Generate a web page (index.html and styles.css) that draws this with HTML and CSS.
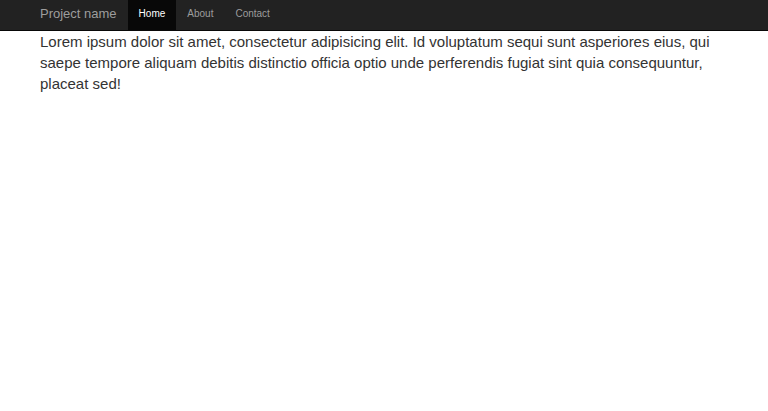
FILE: index.html
```html
<!DOCTYPE html>
<html lang="en">
<head>
<meta charset="utf-8">
<title>Project name</title>
<link rel="stylesheet" href="styles.css">
</head>
<body>
<nav class="navbar">
  <div class="container nav-inner">
    <a class="brand" href="#">Project name</a>
    <ul class="nav">
      <li><a class="active" href="#">Home</a></li>
      <li><a href="#">About</a></li>
      <li><a href="#">Contact</a></li>
    </ul>
  </div>
</nav>
<main class="container">
  <p class="lead">Lorem ipsum dolor sit amet, consectetur adipisicing elit. Id voluptatum sequi sunt asperiores eius, qui saepe tempore aliquam debitis distinctio officia optio unde perferendis fugiat sint quia consequuntur, placeat sed!</p>
</main>
</body>
</html>
```
FILE: styles.css
```css
* { box-sizing: border-box; }
html, body { margin: 0; padding: 0; background: #fff; }
body {
  font-family: "Liberation Sans", Arial, sans-serif;
  color: #333;
}
.container {
  padding: 0 40px;
}
.navbar {
  background: #222;
  border-bottom: 1px solid #080808;
  height: 31px;
}
.nav-inner {
  display: flex;
  align-items: stretch;
  height: 30px;
}
.brand {
  font-size: 13px;
  color: #9d9d9d;
  text-decoration: none;
  display: flex;
  align-items: center;
  padding-bottom: 3px;
  margin-right: 11px;
}
.nav {
  list-style: none;
  margin: 0;
  padding: 0;
  display: flex;
}
.nav li { display: flex; }
.nav a {
  display: flex;
  align-items: center;
  padding: 0 11px 3px;
  font-size: 10px;
  color: #9d9d9d;
  text-decoration: none;
}
.nav a.active {
  background: #080808;
  color: #fff;
}
.lead {
  margin: 0;
  font-size: 15px;
  line-height: 21px;
}
```
